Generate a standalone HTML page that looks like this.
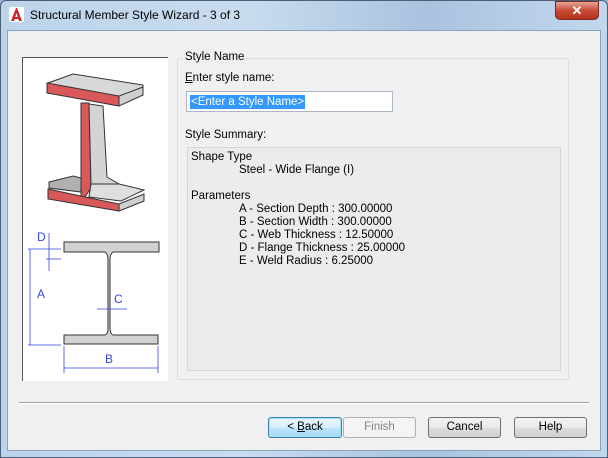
<!DOCTYPE html>
<html><head><style>
*{margin:0;padding:0;box-sizing:border-box}
body{width:608px;height:458px;overflow:hidden;font-family:"Liberation Sans",sans-serif;font-size:11.5px;color:#000;background:#9bb7d6}
.frame{position:absolute;left:0;top:0;width:608px;height:458px;background:linear-gradient(90deg,#bcd3ea,#c9dcef 40%,#a9c3df 70%,#c3d7ec);border:1px solid #4a5f78;border-radius:6px 6px 0 0}
.title{position:absolute;left:30px;top:8px;font-size:12px;color:#000}
.logo{position:absolute;left:9px;top:7px;width:15px;height:15px;background:#fff;border-radius:2px}
.close{position:absolute;left:555px;top:1px;width:44px;height:19px;border:1px solid #7a2a20;border-radius:0 0 5px 5px;background:linear-gradient(#e8a597,#c94c36 50%,#b5321c);color:#fff;font-weight:bold;text-align:center;font-size:13px;line-height:17px}
.client{position:absolute;left:7px;top:30px;width:594px;height:421px;background:#f0f0f0;border:1px solid #8ba2bd}
.abs{position:absolute}
.grp{position:absolute;left:177px;top:58px;width:392px;height:322px;border:1px solid #dcdcdc;border-radius:3px}
.inp{position:absolute;left:186px;top:91px;width:207px;height:21px;border:1px solid #aab6c6;background:#fff}
.sel{position:absolute;left:3px;top:3px;background:#3399ff;color:#fff;padding:0 1px;line-height:14px}
.sum{position:absolute;left:187px;top:147px;width:374px;height:224px;border:1px solid #d5d5d5;background:#ececec}
.btn{position:absolute;top:417px;height:21px;border:1px solid #707070;border-radius:3px;background:linear-gradient(#f2f2f2,#ebebeb 50%,#dddddd 51%,#cfcfcf);text-align:center;line-height:19px}
.ind{padding-left:48px}
</style></head><body>
<div class="frame"></div>
<div class="logo"><svg width="15" height="15"><path d="M2 14 L7 1 L8 1 L13 14 L10 14 L7.5 6 L5 14Z M5.5 10 H9.5 V12 H5.5Z" fill="#d0202a"/></svg></div>
<div class="title">Structural Member Style Wizard - 3 of 3</div>
<div class="close">✕</div>
<div class="client"></div>
<div class="abs" style="left:22px;top:57px;width:146px;height:324px;background:#fff;border-left:1px solid #555;border-top:1px solid #555">
<svg width="146" height="324" viewBox="22 57 146 324">
<g stroke="#333" stroke-width="1">
<polygon points="47,82 72,73 142,84 141,93 118,102 46,92" fill="#d8d8d8"/>
<polygon points="46,82 118,95 118,105 46,92" fill="#d9595a"/>
<polygon points="118,95 142,86 142,94 118,105" fill="#cfcfcf"/>
<polygon points="80,102 88,102 90,187 84,196 80,196" fill="#d9595a"/>
<polygon points="88,103 102,105 106,176 118,183 90,183" fill="#d4d4d4"/>
<polygon points="48,181 72,175 80,177 80,191 48,187" fill="#b0b0b0"/>
<polygon points="90,183 118,183 143,189 120,200 88,196" fill="#dedede"/>
<polygon points="47,188 84,196 118,203 118,210 47,198" fill="#d9595a"/>
<polygon points="118,203 143,193 143,200 118,210" fill="#cfcfcf"/>
<path d="M63 241 H158 V251 H112 Q109 253 109 258 V327 Q109 333 112 334 H157 V343 H63 V334 H104 Q107 333 107 327 V258 Q107 253 104 251 H63Z" fill="#d2d2d2"/>
</g>
<g stroke="#3344dd" stroke-width="0.8" fill="none">
<line x1="29" y1="248" x2="29" y2="344"/><line x1="27" y1="248" x2="60" y2="248"/><line x1="27" y1="344" x2="60" y2="344"/>
<line x1="48" y1="232" x2="48" y2="270"/><line x1="45" y1="258" x2="60" y2="258"/>
<line x1="63" y1="345" x2="63" y2="372"/><line x1="157" y1="345" x2="157" y2="372"/><line x1="63" y1="367" x2="157" y2="367"/>
<line x1="96" y1="308" x2="126" y2="308"/>
</g>
<g fill="#3344dd" font-family="Liberation Sans" font-size="12"><text x="36" y="240">D</text><text x="36" y="297">A</text><text x="113" y="302">C</text><text x="104" y="362">B</text></g>
</svg></div>
<div class="grp"></div>
<div class="abs" style="left:183px;top:51px;background:#f0f0f0;padding:0 2px">Style Name</div>
<div class="abs" style="left:185px;top:72px"><u>E</u>nter style name:</div>
<div class="inp"><span class="sel">&lt;Enter a Style Name&gt;</span></div>
<div class="abs" style="left:185px;top:129px">Style Summary:</div>
<div class="sum"></div>
<div class="abs" style="left:191px;top:151px;line-height:13px">
<div>Shape Type</div>
<div class="ind">Steel - Wide Flange (I)</div>
<div>&nbsp;</div>
<div>Parameters</div>
<div class="ind">A - Section Depth : 300.00000</div>
<div class="ind">B - Section Width : 300.00000</div>
<div class="ind">C - Web Thickness : 12.50000</div>
<div class="ind">D - Flange Thickness : 25.00000</div>
<div class="ind">E - Weld Radius : 6.25000</div>
</div>
<div class="abs" style="left:19px;top:402px;width:570px;height:2px;border-top:1px solid #a0a0a0;border-bottom:1px solid #fff"></div>
<div class="btn" style="left:268px;width:74px;border-color:#3c7fb1;background:linear-gradient(#eaf6fd,#d9f0fc 50%,#bee6fd 51%,#a7d9f5);box-shadow:inset 0 0 0 1px #9fe0fb">&lt; <u>B</u>ack</div>
<div class="btn" style="left:343px;width:73px;border-color:#adb2b5;background:#f4f4f4;color:#838383">Finish</div>
<div class="btn" style="left:428px;width:73px">Cancel</div>
<div class="btn" style="left:514px;width:73px">Help</div>
</body></html>
